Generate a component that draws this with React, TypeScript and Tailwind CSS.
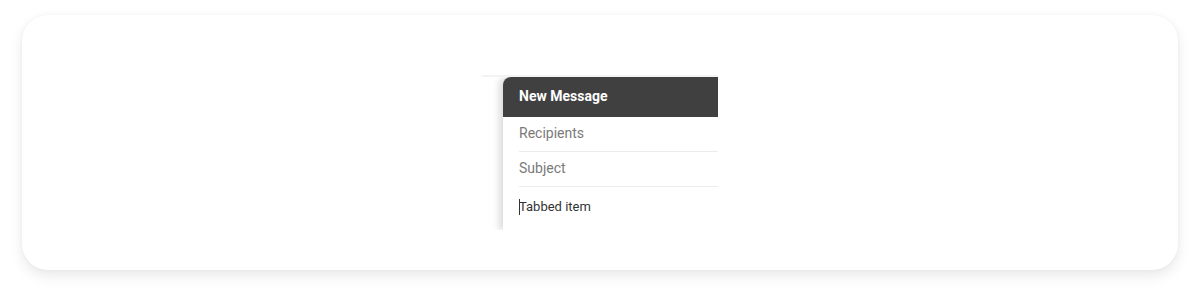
export default function App() {
  return (
    <div className="w-[1200px] h-[300px] bg-white pt-[15px] px-[22px]" style={{ fontFamily: "Roboto, 'Liberation Sans', sans-serif" }}>
      <div className="h-[255px] bg-white rounded-[26px] shadow-[0_6px_14px_rgba(0,0,0,0.09),0_0_4px_rgba(0,0,0,0.04)] flex justify-center pt-[60px]">
        {/* cropped screenshot of compose window */}
        <div className="w-[236px] h-[155px] overflow-hidden flex flex-col">
          <div className="h-[2px] bg-[#f3f3f3]" />
          <div className="flex-1 flex pl-[21px] overflow-hidden">
            <div className="flex-1 flex flex-col rounded-tl-[8px] bg-white shadow-[-4px_0_7px_rgba(0,0,0,0.14)]">
              <div className="h-[40px] bg-[#404040] rounded-tl-[8px] flex items-center px-4 pb-px text-white text-[14px] font-bold">
                New Message
              </div>
              <div className="pl-4">
                <div className="h-[35px] flex items-center pb-[2px] text-[14px] text-[#7a7a7a] border-b border-[#ececec]">
                  Recipients
                </div>
                <div className="h-[35px] flex items-center pb-[2px] text-[14px] text-[#7a7a7a] border-b border-[#ececec]">
                  Subject
                </div>
                <div className="h-[40px] flex items-center text-[13px] text-[#333]">
                  <span className="w-px h-[16px] bg-[#333] mr-[-1px]" />
                  Tabbed item
                </div>
              </div>
            </div>
          </div>
        </div>
      </div>
    </div>
  );
}
